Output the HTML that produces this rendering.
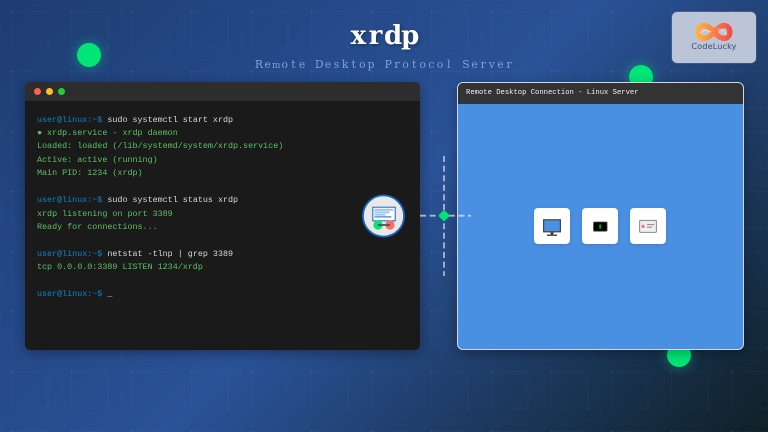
<!DOCTYPE html>
<html lang="en"><head><meta charset="utf-8"><title>xrdp</title>
<style>
html,body{margin:0;padding:0;width:768px;height:432px;overflow:hidden;background:#1e3c72}
#s{position:relative;width:768px;height:432px;overflow:hidden;background:linear-gradient(135deg,#1e3c72 0%,#2a5298 50%,#0f2027 100%);font-family:"Liberation Mono",monospace;filter:blur(.3px)}
.a{position:absolute}
.g{width:24px;height:24px;border-radius:50%;background:#00e676;box-shadow:0 0 12px rgba(0,255,136,.4)}
.t{left:37px;top:113.5px;font-size:8.4px;line-height:13.44px;white-space:pre;color:#5cc063}
.t b{font-weight:normal;color:#0a84c8}.t i{font-style:normal;color:#d8d8d8}
.ic{top:208px;width:36px;height:36px;border-radius:4px;background:#fff;box-shadow:0 1px 4px rgba(0,0,0,.12)}
.tt span{display:inline-block;width:17.1px;text-align:center}
.st span{display:inline-block;width:8.64px;text-align:center}
</style></head><body><div id="s">
<svg class="a" style="left:0;top:0" width="768" height="432">
<defs><pattern id="p" width="60" height="60" patternUnits="userSpaceOnUse">
<path d="M0 0H60M0 0V60" stroke="#fff" stroke-opacity=".024" stroke-width="1" fill="none"/>
<rect x="11.5" y="11.5" width="36.5" height="36.5" fill="none" stroke="#fff" stroke-opacity=".024" stroke-width="1"/>
<circle cx="11.5" cy="11.5" r="1" fill="#fff" fill-opacity=".07"/><circle cx="48" cy="48" r="1" fill="#fff" fill-opacity=".07"/>
</pattern></defs>
<rect width="768" height="432" fill="url(#p)"/></svg>

<div class="a g" style="left:77px;top:43px"></div>
<div class="a g" style="left:629px;top:65px"></div>
<div class="a g" style="left:667px;top:343px"></div>

<div class="a tt" style="left:0;width:768px;top:18.5px;text-align:center;font-family:'DejaVu Serif',serif;font-size:26px;line-height:34px;font-weight:bold;color:#fff;text-shadow:1px 1px 3px rgba(0,0,0,.4);white-space:nowrap"><span>x</span><span>r</span><span>d</span><span>p</span></div>
<div class="a st" style="left:0;width:768px;top:56.5px;text-align:center;font-family:'DejaVu Serif',serif;font-size:10.8px;line-height:16px;color:#7ea2de;white-space:nowrap"><span>R</span><span>e</span><span style="font-size:9px">m</span><span>o</span><span>t</span><span>e</span><span> </span><span>D</span><span>e</span><span>s</span><span>k</span><span>t</span><span>o</span><span>p</span><span> </span><span>P</span><span>r</span><span>o</span><span>t</span><span>o</span><span>c</span><span>o</span><span>l</span><span> </span><span>S</span><span>e</span><span>r</span><span>v</span><span>e</span><span>r</span></div>

<div class="a" style="left:672px;top:12px;width:84px;height:50.5px;border-radius:5px;background:#bcc5d7;box-shadow:0 0 0 .5px rgba(255,255,255,.2)"></div>
<svg class="a" style="left:695px;top:21px" width="38" height="21" viewBox="0 0 38 21">
<defs><linearGradient id="lg" x1="0" x2="1" y1="0" y2="0"><stop offset="0" stop-color="#ffb33e"/><stop offset=".55" stop-color="#fb7a45"/><stop offset="1" stop-color="#f24e4e"/></linearGradient></defs>
<path d="M19 11C15 6 12 4.6 9 4.6C5.5 4.6 3.2 7.4 3.2 11C3.2 14.6 5.5 17.4 9 17.4C12 17.4 15 16 19 11C23 6 26 4.6 29 4.6C32.5 4.6 34.8 7.4 34.8 11C34.8 14.6 32.5 17.4 29 17.4C26 17.4 23 16 19 11Z" fill="none" stroke="url(#lg)" stroke-width="5.4"/>
<path d="M5 12C9 9 13 9 16 11M23 8C27 9 30 11 32 14" fill="none" stroke="#f8dcc4" stroke-width=".9"/>
</svg>
<div class="a" style="left:672px;width:84px;top:41px;text-align:center;font-family:'DejaVu Sans',sans-serif;font-size:8.2px;line-height:11px;letter-spacing:.1px;color:#3a4f70">CodeLucky</div>

<div class="a" style="left:24.5px;top:82px;width:395px;height:267.5px;border-radius:5px;background:#1a1a1a;box-shadow:0 3px 12px rgba(0,0,0,.35);overflow:hidden">
<div style="height:19px;background:#2d2d2d"></div></div>
<div class="a" style="left:34px;top:87.8px;width:7.2px;height:7.2px;border-radius:50%;background:#ff5f56"></div>
<div class="a" style="left:46px;top:87.8px;width:7.2px;height:7.2px;border-radius:50%;background:#ffbd2e"></div>
<div class="a" style="left:58px;top:87.8px;width:7.2px;height:7.2px;border-radius:50%;background:#27c93f"></div>

<div class="a t"><b>user@linux:~$</b> <i>sudo systemctl start xrdp</i>
● xrdp.service - xrdp daemon
Loaded: loaded (/lib/systemd/system/xrdp.service)
Active: active (running)
Main PID: 1234 (xrdp)

<b>user@linux:~$</b> <i>sudo systemctl status xrdp</i>
xrdp listening on port 3389
Ready for connections...

<b>user@linux:~$</b> <i>netstat -tlnp | grep 3389</i>
tcp 0.0.0.0:3389 LISTEN 1234/xrdp

<b>user@linux:~$</b> <i>_</i></div>

<div class="a" style="left:456.5px;top:81.5px;width:287px;height:268.5px;box-sizing:border-box;border:1.4px solid #d4d8de;border-radius:6px;background:#4a90e2;overflow:hidden;box-shadow:0 3px 12px rgba(0,0,0,.3)">
<div style="height:21.5px;background:#333"></div></div>
<div class="a" style="left:466px;top:87.5px;font-size:7.2px;line-height:11px;color:#f2f2f2;white-space:pre">Remote Desktop Connection - Linux Server</div>

<div class="a ic" style="left:534px"></div>
<div class="a ic" style="left:582px"></div>
<div class="a ic" style="left:630px"></div>
<svg class="a" style="left:534px;top:208px" width="36" height="36">
<rect x="9.6" y="11.8" width="16.8" height="12" fill="#4a90e2" stroke="#444" stroke-width="1.2"/>
<rect x="16.5" y="24" width="3" height="3" fill="#444"/><rect x="13" y="26.5" width="10" height="1.4" fill="#444"/></svg>
<svg class="a" style="left:582px;top:208px" width="36" height="36">
<rect x="11.5" y="14" width="13.6" height="9.2" rx=".8" fill="#000" stroke="#555" stroke-width=".8"/>
<rect x="17.2" y="16.5" width="2" height="4.2" fill="#0a0"/></svg>
<svg class="a" style="left:630px;top:208px" width="36" height="36">
<rect x="9.6" y="12.4" width="16.8" height="12" rx="1" fill="#eee" stroke="#888" stroke-width="1"/>
<circle cx="13" cy="18.4" r="1.6" fill="#ff6b6b"/><rect x="17" y="16" width="7.4" height="1.2" fill="#999"/><rect x="17" y="18.6" width="5" height="1.2" fill="#999"/></svg>

<svg class="a" style="left:415px;top:150px" width="60" height="130">
<path d="M5 65.7H56" stroke="#fff" stroke-opacity=".6" stroke-width="1.8" stroke-dasharray="6 3.6" fill="none"/>
<path d="M29 6V126" stroke="#fff" stroke-opacity=".6" stroke-width="1.8" stroke-dasharray="6 3.6" fill="none"/>
<path d="M29 61.7L33 65.7L29 69.7L25 65.7Z" fill="#00e676" stroke="#00e676" stroke-width="2.6" stroke-linejoin="round"/>
</svg>

<svg class="a" style="left:360px;top:192px" width="48" height="48">
<circle cx="23.5" cy="24" r="20.6" fill="#e8e8e8" stroke="#1565c0" stroke-width="1.8"/>
<rect x="12.8" y="15.2" width="22.4" height="13.6" fill="#fff" stroke="#1565c0" stroke-width="1"/>
<rect x="14.4" y="16.8" width="19" height="2" fill="#9dc3ee"/><rect x="14.4" y="19.4" width="15" height="2" fill="#9dc3ee"/><rect x="14.4" y="22" width="11" height="1.6" fill="#9dc3ee"/><rect x="14.4" y="24.4" width="17" height="1" fill="#1565c0"/>
<circle cx="18" cy="33" r="4.6" fill="#00e676"/><circle cx="30" cy="33" r="4.6" fill="#ff6b6b"/>
<rect x="18" y="32.2" width="12" height="1.6" fill="#444"/></svg>
</div></body></html>
